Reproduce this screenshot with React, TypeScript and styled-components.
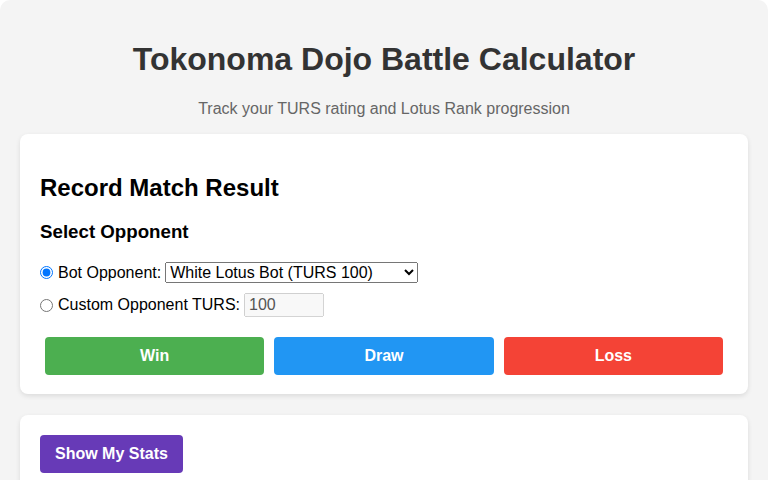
import styled, { createGlobalStyle } from 'styled-components';

const Global = createGlobalStyle`
  html, body {
    margin: 0;
    padding: 0;
    background: #fff;
    font-family: 'Liberation Sans', Arial, sans-serif;
  }
`;

export default function App() {
  return (
    <>
      <Global />
      <Container>
        <Title>Tokonoma Dojo Battle Calculator</Title>
        <Subtitle>Track your TURS rating and Lotus Rank progression</Subtitle>

        <Card>
          <CardTitle>Record Match Result</CardTitle>
          <SectionTitle>Select Opponent</SectionTitle>

          <OptionRow>
            <Radio type="radio" name="opp" defaultChecked />
            <label>Bot Opponent: </label>
            <Select defaultValue="100">
              <option value="100">White Lotus Bot (TURS 100)</option>
            </Select>
          </OptionRow>
          <OptionRow>
            <Radio type="radio" name="opp" />
            <label>Custom Opponent TURS: </label>
            <NumInput type="number" defaultValue={100} disabled />
          </OptionRow>

          <Actions>
            <ResultBtn tone="#4CAF50">Win</ResultBtn>
            <ResultBtn tone="#2196F3">Draw</ResultBtn>
            <ResultBtn tone="#f44336">Loss</ResultBtn>
          </Actions>
        </Card>

        <Card>
          <StatsBtn>Show My Stats</StatsBtn>
        </Card>
      </Container>
    </>
  );
}

const Container = styled.div`
  max-width: 768px;
  min-height: 480px;
  box-sizing: border-box;
  margin: 0 auto;
  padding: 20px;
  background: #f4f4f4;
  border-radius: 10px;
`;

const Title = styled.h1`
  margin: 21px 0 0;
  text-align: center;
  font-size: 32px;
  line-height: 37px;
  font-weight: 700;
  color: #333;
`;

const Subtitle = styled.p`
  margin: 22px 0 16px;
  text-align: center;
  font-size: 16px;
  color: #666;
`;

const Card = styled.div`
  background: #fff;
  border-radius: 8px;
  padding: 20px 20px 19px;
  margin-bottom: 21px;
  box-shadow: 0 2px 5px rgba(0, 0, 0, 0.1);
`;

const CardTitle = styled.h2`
  margin: 20px 0 19px;
  font-size: 24px;
  font-weight: 700;
  color: #000;
`;

const SectionTitle = styled.h3`
  margin: 0 0 19px;
  font-size: 18.72px;
  font-weight: 700;
  color: #000;
`;

const OptionRow = styled.div`
  display: flex;
  align-items: center;
  margin-bottom: 10px;
  font-size: 16px;
  color: #000;
`;

const Radio = styled.input`
  margin: 0 5px 0 0;
  width: 13px;
  height: 13px;
`;

const Select = styled.select`
  margin-left: 4px;
  width: 253px;
  height: 21px;
  font-size: 16px;
  font-family: 'Liberation Sans', Arial, sans-serif;
`;

const NumInput = styled.input`
  margin-left: 4px;
  width: 80px;
  height: 24px;
  box-sizing: border-box;
  font-size: 16px;
  font-family: 'Liberation Sans', Arial, sans-serif;
  padding: 1px 3px;
`;

const Actions = styled.div`
  display: flex;
  margin-top: 20px;
`;

const ResultBtn = styled.button<{ tone: string }>`
  flex: 1;
  margin: 0 5px;
  padding: 10px;
  border: none;
  border-radius: 4px;
  background: ${p => p.tone};
  color: #fff;
  font-size: 16px;
  font-weight: 700;
  font-family: 'Liberation Sans', Arial, sans-serif;
  cursor: pointer;
`;

const StatsBtn = styled.button`
  padding: 10px 15px;
  border: none;
  border-radius: 4px;
  background: #673AB7;
  color: #fff;
  font-size: 16px;
  font-weight: 700;
  font-family: 'Liberation Sans', Arial, sans-serif;
  cursor: pointer;
`;
